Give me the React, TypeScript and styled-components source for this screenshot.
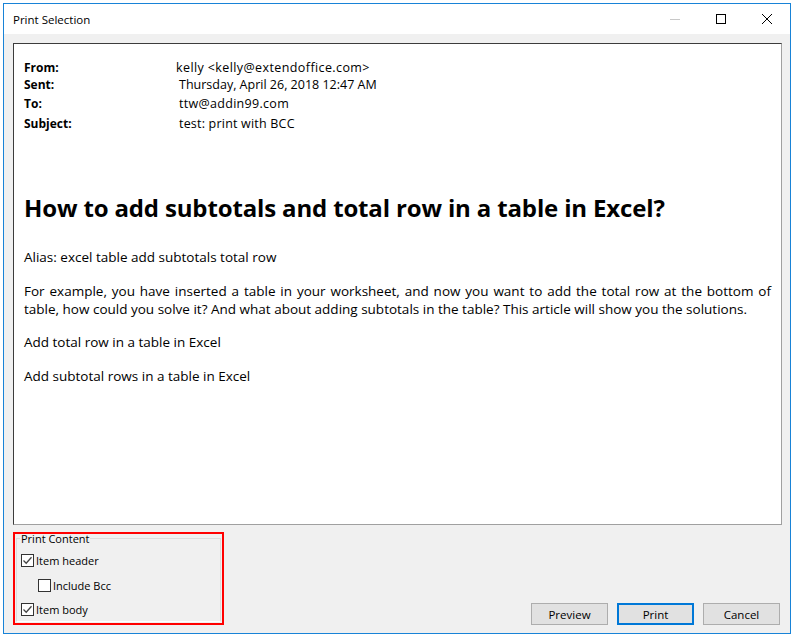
import styled, { createGlobalStyle } from 'styled-components';

const GlobalStyle = createGlobalStyle`
  html, body {
    margin: 0;
    padding: 0;
    background: #ffffff;
  }
  body {
    font-family: "Open Sans", "Noto Sans", sans-serif;
    color: #000;
  }
`;

const Window = styled.div`
  margin: 3px 0 0 3px;
  width: 786px;
  height: 629px;
  border: 1px solid #1883d7;
  display: flex;
  flex-direction: column;
  background: #f0f0f0;
`;

const TitleBar = styled.div`
  height: 30px;
  background: #ffffff;
  display: flex;
  align-items: center;
  justify-content: space-between;
  padding-left: 9px;
`;

const Title = styled.span`
  font-family: "Open Sans", sans-serif;
  font-size: 11.5px;
  color: #000;
`;

const Controls = styled.div`
  display: flex;
  height: 100%;
`;

const ControlButton = styled.div`
  width: 46px;
  height: 100%;
  display: flex;
  align-items: center;
  justify-content: center;
`;

const Body = styled.div`
  flex: 1;
  display: flex;
  flex-direction: column;
  padding: 9px 8px 8px 9px;
`;

const Panel = styled.div`
  height: 482px;
  background: #ffffff;
  border-top: 1px solid #3c3c3c;
  border-left: 1px solid #3c3c3c;
  border-right: 1px solid #a0a0a0;
  border-bottom: 1px solid #a0a0a0;
  padding: 15px 10px 0 10px;
  box-sizing: border-box;
  font-family: "Open Sans", sans-serif;
`;

const HeaderGrid = styled.div`
  display: grid;
  grid-template-columns: 152px 1fr;
  font-size: 12px;
`;

const HeaderLabel = styled.div<{ $h: number }>`
  font-weight: bold;
  height: ${p => p.$h}px;
  line-height: ${p => p.$h}px;
`;

const HeaderValue = styled.div<{ $h: number; $shift?: number; $spacing?: number }>`
  height: ${p => p.$h}px;
  line-height: ${p => p.$h}px;
  padding-left: ${p => p.$shift ?? 3}px;
  font-size: 12.5px;
  letter-spacing: ${p => p.$spacing ?? 0}px;
`;

const Heading = styled.h1`
  margin: 59px 0 0 0;
  font-size: 24px;
  line-height: 32px;
  font-weight: bold;
  letter-spacing: -0.15px;
`;

const Para = styled.p<{ $top: number }>`
  margin: ${p => p.$top}px 0 0 0;
  font-size: 13.5px;
  line-height: 18px;
  text-align: justify;
`;

const Footer = styled.div`
  flex: 1;
  display: flex;
  justify-content: space-between;
  align-items: flex-end;
`;

const Highlight = styled.div`
  width: 206px;
  height: 89px;
  border: 2px solid #ff0000;
  padding: 0 0 0 1px;
  box-sizing: content-box;
`;

const Group = styled.fieldset`
  margin: -2px 0 0 0;
  padding: 0 0 0 4px;
  height: 90px;
  width: 205px;
  border: 1px solid #dcdcdc;
  border-bottom-color: #ffffff;
  box-sizing: border-box;
  font-family: "Open Sans", sans-serif;
  font-size: 11px;
`;

const Legend = styled.legend`
  padding: 0 1px;
  margin-left: -1px;
  font-size: 11px;
  line-height: 13px;
  color: #000;
`;

const CheckRow = styled.label<{ $indent?: number; $top: number }>`
  display: flex;
  align-items: center;
  gap: 2px;
  margin-top: ${p => p.$top}px;
  padding-left: ${p => p.$indent ?? 0}px;
  font-size: 11px;
  height: 16px;
`;

const Box = styled.span`
  width: 11px;
  height: 11px;
  border: 1px solid #333333;
  background: #ffffff;
  display: flex;
  align-items: center;
  justify-content: center;
`;

const Buttons = styled.div`
  display: flex;
  gap: 9px;
  margin-right: 2px;
`;

const Button = styled.div<{ $primary?: boolean }>`
  width: 77px;
  height: 22px;
  box-sizing: border-box;
  background: #e1e1e1;
  border: ${p => (p.$primary ? '2px solid #0078d7' : '1px solid #adadad')};
  display: flex;
  align-items: center;
  justify-content: center;
  font-family: "Open Sans", sans-serif;
  font-size: 11.5px;
`;

const Check = ({ checked }: { checked: boolean }) => (
  <Box>
    {checked && (
      <svg width="11" height="11" viewBox="0 0 11 11">
        <path d="M1.5 5.5 L4.2 8.2 L9.5 2.2" fill="none" stroke="#444" strokeWidth="1.3" />
      </svg>
    )}
  </Box>
);

const headerRows = [
  { label: 'From:', value: 'kelly <kelly@extendoffice.com>', h: 17, shift: 0, spacing: 0.4 },
  { label: 'Sent:', value: 'Thursday, April 26, 2018 12:47 AM', h: 18 },
  { label: 'To:', value: 'ttw@addin99.com', h: 20, spacing: 0.3 },
  { label: 'Subject:', value: 'test: print with BCC', h: 19, spacing: 0.2 },
];

const App = () => {
  return (
    <>
      <GlobalStyle />
      <Window>
        <TitleBar>
          <Title>Print Selection</Title>
          <Controls>
            <ControlButton>
              <svg width="10" height="10" viewBox="0 0 10 10">
                <line x1="0" y1="5.5" x2="10" y2="5.5" stroke="#c8c8c8" strokeWidth="1" />
              </svg>
            </ControlButton>
            <ControlButton>
              <svg width="10" height="10" viewBox="0 0 10 10">
                <rect x="0.5" y="0.5" width="9" height="9" fill="none" stroke="#000" strokeWidth="1" />
              </svg>
            </ControlButton>
            <ControlButton>
              <svg width="10" height="10" viewBox="0 0 10 10">
                <path d="M0 0 L10 10 M10 0 L0 10" stroke="#000" strokeWidth="1" />
              </svg>
            </ControlButton>
          </Controls>
        </TitleBar>
        <Body>
          <Panel>
            <HeaderGrid>
              {headerRows.map(r => (
                <>
                  <HeaderLabel key={r.label} $h={r.h}>{r.label}</HeaderLabel>
                  <HeaderValue key={r.value} $h={r.h} $shift={r.shift} $spacing={r.spacing}>{r.value}</HeaderValue>
                </>
              ))}
            </HeaderGrid>
            <Heading>How to add subtotals and total row in a table in Excel?</Heading>
            <Para $top={24}>Alias: excel table add subtotals total row</Para>
            <Para $top={16}>
              For example, you have inserted a table in your worksheet, and now you want to add the total row at the bottom of table, how could you solve it? And what about adding subtotals in the table? This article will show you the solutions.
            </Para>
            <Para $top={15}>Add total row in a table in Excel</Para>
            <Para $top={16}>Add subtotal rows in a table in Excel</Para>
          </Panel>
          <Footer>
            <Highlight>
              <Group>
                <Legend>Print Content</Legend>
                <CheckRow $top={7}>
                  <Check checked />
                  <span>Item header</span>
                </CheckRow>
                <CheckRow $top={9} $indent={17}>
                  <Check checked={false} />
                  <span>Include Bcc</span>
                </CheckRow>
                <CheckRow $top={8}>
                  <Check checked />
                  <span>Item body</span>
                </CheckRow>
              </Group>
            </Highlight>
            <Buttons>
              <Button>Preview</Button>
              <Button $primary>Print</Button>
              <Button>Cancel</Button>
            </Buttons>
          </Footer>
        </Body>
      </Window>
    </>
  );
};

export default App;
